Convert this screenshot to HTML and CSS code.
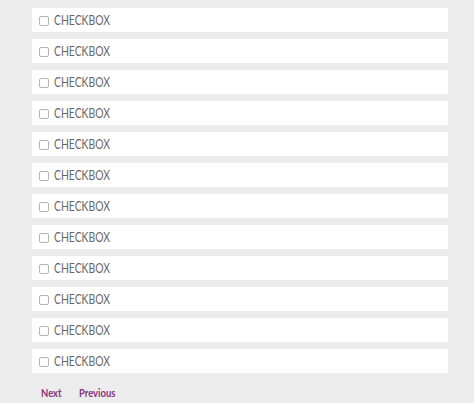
FILE: index.html
```html
<!DOCTYPE html>
<html>
<head>
<meta charset="utf-8">
<link rel="stylesheet" href="styles.css">
</head>
<body>
<div class="page">
  <div class="list">
    <label class="row"><input type="checkbox" class="cb"><span class="label">CHECKBOX</span></label>
    <label class="row"><input type="checkbox" class="cb"><span class="label">CHECKBOX</span></label>
    <label class="row"><input type="checkbox" class="cb"><span class="label">CHECKBOX</span></label>
    <label class="row"><input type="checkbox" class="cb"><span class="label">CHECKBOX</span></label>
    <label class="row"><input type="checkbox" class="cb"><span class="label">CHECKBOX</span></label>
    <label class="row"><input type="checkbox" class="cb"><span class="label">CHECKBOX</span></label>
    <label class="row"><input type="checkbox" class="cb"><span class="label">CHECKBOX</span></label>
    <label class="row"><input type="checkbox" class="cb"><span class="label">CHECKBOX</span></label>
    <label class="row"><input type="checkbox" class="cb"><span class="label">CHECKBOX</span></label>
    <label class="row"><input type="checkbox" class="cb"><span class="label">CHECKBOX</span></label>
    <label class="row"><input type="checkbox" class="cb"><span class="label">CHECKBOX</span></label>
    <label class="row"><input type="checkbox" class="cb"><span class="label">CHECKBOX</span></label>
  </div>
  <div class="pager">
    <a class="link" href="#">Next</a>
    <a class="link" href="#">Previous</a>
  </div>
</div>
</body>
</html>
```

FILE: styles.css
```css
html, body {
  margin: 0;
  padding: 0;
  background: #ececec;
  height: 100%;
}
.page {
  padding: 8px 26px 0 32px;
  width: 416px;
  font-family: Lato, "Open Sans", sans-serif;
}
.list {
  display: flex;
  flex-direction: column;
  gap: 7px;
}
.row {
  display: flex;
  align-items: center;
  height: 24px;
  background: #fff;
  padding-left: 7px;
  color: #666;
  font-size: 12.5px;
}
.cb {
  appearance: none;
  -webkit-appearance: none;
  width: 10px;
  height: 10px;
  margin: 1px 5px 0 0;
  border: 1px solid #b4b4b4;
  border-radius: 2px;
  background: #fff;
  box-sizing: border-box;
}
.label {
  display: inline-block;
  transform: scaleX(0.83);
  transform-origin: left center;
}
.pager {
  display: flex;
  gap: 14px;
  padding: 13px 0 0 9px;
}
.link {
  display: inline-block;
  color: #87347d;
  font-size: 11px;
  font-weight: 700;
  text-decoration: none;
  transform: scaleX(0.86);
  transform-origin: left center;
}
```
